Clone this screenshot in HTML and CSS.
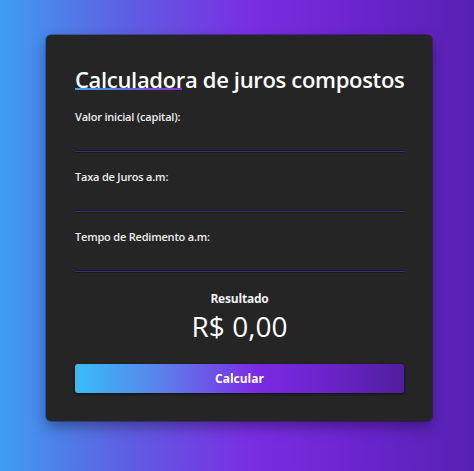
FILE: index.html
```html
<!DOCTYPE html>
<html lang="pt-BR">
<head>
<meta charset="utf-8">
<title>Calculadora de juros compostos</title>
<link rel="stylesheet" href="styles.css">
</head>
<body>
<main class="card">
  <h1 class="title"><span class="accent">Calculadora</span> de juros compostos</h1>
  <div class="field">
    <label class="label" for="capital">Valor inicial (capital):</label>
    <input class="input" id="capital" type="text">
  </div>
  <div class="field">
    <label class="label" for="taxa">Taxa de Juros a.m:</label>
    <input class="input" id="taxa" type="text">
  </div>
  <div class="field">
    <label class="label" for="tempo">Tempo de Redimento a.m:</label>
    <input class="input" id="tempo" type="text">
  </div>
  <div class="result">
    <div class="result-label">Resultado</div>
    <div class="result-value">R$ 0,00</div>
  </div>
  <button class="button" type="button">Calcular</button>
</main>
</body>
</html>
```
FILE: styles.css
```css
html, body {
  margin: 0;
  padding: 0;
}
body {
  min-height: 471px;
  font-family: "Open Sans", "Noto Sans", sans-serif;
  background: linear-gradient(90deg, #3f9ef0 0%, #5c62e2 25%, #7a2fe2 52%, #6b25cf 75%, #5621b2 100%);
  display: flex;
  justify-content: center;
  align-items: flex-start;
  padding-top: 35px;
  box-sizing: border-box;
  padding-left: 4px;
}
.card {
  width: 386px;
  box-sizing: border-box;
  background: #252525;
  border-radius: 5px;
  padding: 29px 28px 28px 29px;
  box-shadow: 0 6px 14px rgba(0, 0, 0, 0.35), 0 0 0 1px rgba(0, 0, 0, 0.25);
  display: flex;
  flex-direction: column;
  color: #ececec;
}
.title {
  margin: 0 0 15px;
  font-size: 22px;
  font-weight: 600;
  line-height: 30px;
  color: #ffffff;
  white-space: nowrap;
  letter-spacing: -0.33px;
}
.accent {
  background: linear-gradient(90deg, #3aa6ea, #8a2fd8) 0 calc(100% - 4px) / 107px 2px no-repeat;
}
.field {
  display: flex;
  flex-direction: column;
  margin-bottom: 17px;
}
.label {
  font-size: 11px;
  font-weight: 600;
  line-height: 16px;
  color: #ececec;
  letter-spacing: -0.2px;
}
.input {
  height: 27px;
  box-sizing: border-box;
  background: transparent;
  border: none;
  border-bottom: 1px solid #3a2d82;
  box-shadow: 0 1px 0 #1a1a1a, 0 -1px 0 #1a1a1a inset;
  outline: none;
  padding: 0;
  color: #fff;
}
.result {
  display: flex;
  flex-direction: column;
  align-items: center;
  margin-top: 2px;
}
.result-label {
  font-size: 12px;
  font-weight: 700;
  line-height: 16px;
  color: #f0f0f0;
  letter-spacing: -0.2px;
}
.result-value {
  font-size: 28px;
  font-weight: 400;
  line-height: 38px;
  color: #ffffff;
}
.button {
  margin-top: 19px;
  height: 29px;
  border: none;
  border-radius: 3px;
  background: linear-gradient(90deg, #38bdf8 0%, #5d7ce9 28%, #7b2ae6 55%, #6a23c8 78%, #4f1f9c 100%);
  box-shadow: 0 1px 3px rgba(0, 0, 0, 0.6);
  color: #ffffff;
  font-family: "Open Sans", "Noto Sans", sans-serif;
  font-size: 12px;
  font-weight: 700;
  cursor: pointer;
}
```
